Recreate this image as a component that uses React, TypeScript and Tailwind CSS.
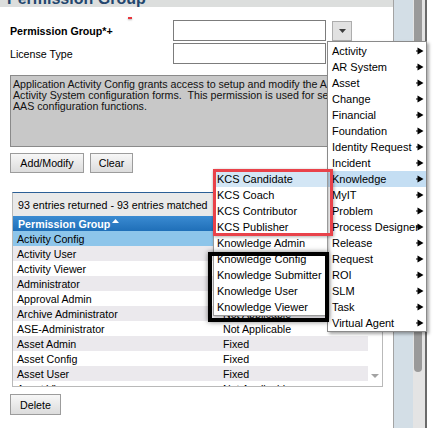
import React from "react";

const menuItems = [
  "Activity",
  "AR System",
  "Asset",
  "Change",
  "Financial",
  "Foundation",
  "Identity Request",
  "Incident",
  "Knowledge",
  "MyIT",
  "Problem",
  "Process Designer",
  "Release",
  "Request",
  "ROI",
  "SLM",
  "Task",
  "Virtual Agent",
];

const subItems = [
  "KCS Candidate",
  "KCS Coach",
  "KCS Contributor",
  "KCS Publisher",
  "Knowledge Admin",
  "Knowledge Config",
  "Knowledge Submitter",
  "Knowledge User",
  "Knowledge Viewer",
];

const rows: [string, string][] = [
  ["Activity Config", "Fixed"],
  ["Activity User", "Fixed"],
  ["Activity Viewer", "Fixed"],
  ["Administrator", "Fixed"],
  ["Approval Admin", "Not Applicable"],
  ["Archive Administrator", "Not Applicable"],
  ["ASE-Administrator", "Not Applicable"],
  ["Asset Admin", "Fixed"],
  ["Asset Config", "Fixed"],
  ["Asset User", "Fixed"],
  ["Asset Viewer", "Not Applicable"],
];

function Arrow() {
  return (
    <svg width="8" height="8" viewBox="0 0 8 8" className="absolute right-[2px] top-[4px]">
      <rect x="0" y="3.5" width="2" height="1" fill="#000" />
      <polygon points="1.5,0.5 7.5,4 1.5,7.5" fill="#000" />
    </svg>
  );
}

export default function App() {
  return (
    <div className="relative w-[433px] h-[428px] overflow-hidden bg-white font-['Liberation_Sans',Arial,sans-serif] text-black">
      <div className="flex h-full">
        {/* main column */}
        <div className="w-[393px] flex flex-col">
          <div className="h-[7px] bg-[#dcdedd] overflow-hidden">
            <div className="ml-[7px] mt-[-9px] text-[16px] leading-[16px] font-bold text-[#23466e] whitespace-nowrap">
              Permission Group
            </div>
          </div>

          <div className="mt-[13px] ml-[10px] flex items-center h-[21px]">
            <div className="w-[163px] text-[10.667px] font-bold">Permission Group*+</div>
            <div className="w-[153px] h-[21px] border border-[#7c7c7c] bg-white" />
            <div className="ml-[6px] w-[20px] h-[20px] bg-[#e1e1e1] border border-[#adadad] flex items-center justify-center">
              <svg width="7" height="4" viewBox="0 0 7 4">
                <polygon points="0,0 7,0 3.5,4" fill="#3c3c3c" />
              </svg>
            </div>
          </div>

          <div className="mt-[2px] ml-[10px] flex items-center h-[21px]">
            <div className="w-[163px] text-[10.667px]">License Type</div>
            <div className="w-[153px] h-[21px] border border-[#7c7c7c] bg-white" />
          </div>

          <div className="mt-[11px] ml-[10px] w-[377px] h-[72px] bg-[#c8c8c8] border border-[#8a8a8a] pl-[2px] pt-[3px] overflow-hidden text-[10.667px] leading-[11px] text-[#111]">
            <div className="whitespace-nowrap">Application Activity Config grants access to setup and modify the Application</div>
            <div className="whitespace-nowrap">Activity System configuration forms.&nbsp; This permission is used for setting up</div>
            <div className="whitespace-nowrap">AAS configuration functions.</div>
          </div>

          <div className="mt-[6px] ml-[10px] flex gap-[6px]">
            <div className="w-[74px] h-[20px] border border-[#9c9c9c] bg-gradient-to-b from-[#f7f7f7] to-[#dcdcdc] flex items-center justify-center text-[10.667px]">
              Add/Modify
            </div>
            <div className="w-[43px] h-[20px] border border-[#9c9c9c] bg-gradient-to-b from-[#f7f7f7] to-[#dcdcdc] flex items-center justify-center text-[10.667px]">
              Clear
            </div>
          </div>

          <div className="mt-[19px] ml-[12px] w-[371px] h-[195px] border border-[#b9b9b9] border-t-[#2b5f96] flex flex-col overflow-hidden text-[10.667px]">
            <div className="h-[23px] shrink-0 bg-[#e9e9e9] flex items-center pl-[5px] whitespace-nowrap">
              93 entries returned - 93 entries matched
            </div>
            <div className="flex flex-1 min-h-0">
              <div className="w-[355px] flex flex-col">
                <div className="h-[15px] shrink-0 bg-gradient-to-b from-[#3a8bd2] to-[#1f6fb8] text-white font-bold flex items-center pl-[5px]">
                  <span>Permission Group</span>
                  <svg width="7" height="4" viewBox="0 0 7 4" className="ml-[2px] mb-[6px]">
                    <polygon points="0,4 7,4 3.5,0" fill="#fff" />
                  </svg>
                </div>
                {rows.map(([name, val], i) => (
                  <div
                    key={name}
                    className={
                      "h-[15px] shrink-0 flex items-center whitespace-nowrap " +
                      (i === 0 ? "bg-[#8dc5ea]" : i % 2 === 1 ? "bg-[#ebe9ed]" : "bg-white")
                    }
                  >
                    <div className="w-[206px] pl-[4px]">{name}</div>
                    <div className="pl-[4px]">{val}</div>
                  </div>
                ))}
              </div>
              <div className="w-[14px] flex flex-col justify-end items-center pb-[8px]">
                <svg width="8" height="4" viewBox="0 0 8 4">
                  <polygon points="0,0 8,0 4,4" fill="#a3a3a3" />
                </svg>
              </div>
            </div>
          </div>

          <div className="mt-[7px] ml-[10px]">
            <div className="w-[51px] h-[21px] border border-[#9c9c9c] bg-gradient-to-b from-[#f7f7f7] to-[#dcdcdc] flex items-center justify-center text-[10.667px]">
              Delete
            </div>
          </div>
        </div>

        {/* right side strip */}
        <div className="w-[1px] bg-[#a3a3a3]" />
        <div className="w-[19px] bg-[#d3dee6]" />
        <div className="w-[12px] bg-[#e4e4e4]">
          <div className="ml-[1px] w-[8px] h-[372px] bg-[#9a9a9a] rounded-b-[4px]" />
        </div>
        <div className="w-[2px] bg-[#6a6a6a]" />
        <div className="w-[6px] bg-white" />
      </div>

      {/* red mark */}
      <div className="absolute left-[128px] top-[17px] w-[4px] h-[2px] bg-[#e8363d] shadow-[0_1px_2px_rgba(0,0,0,0.3)]" />

      {/* main dropdown menu */}
      <div className="absolute left-[327px] top-[41px] w-[100px] bg-white border border-[#8a8a8a] pt-[1px] shadow-[2px_2px_3px_rgba(0,0,0,0.35)] text-[11px] leading-[16px]">
        {menuItems.map((m) => (
          <div
            key={m}
            className={"relative h-[16px] pl-[4px] whitespace-nowrap " + (m === "Knowledge" ? "bg-[#c4def3]" : "")}
          >
            {m}
            <Arrow />
          </div>
        ))}
      </div>

      {/* submenu */}
      <div className="absolute left-[213px] top-[170px] w-[115px] bg-white border border-[#9a9a9a] shadow-[1px_1px_3px_rgba(0,0,0,0.3)] text-[11px] leading-[16px]">
        {subItems.map((s, i) => (
          <div key={s} className={"h-[16px] pl-[3px] whitespace-nowrap " + (i === 0 ? "bg-[#d3e6f5]" : "")}>
            {s}
          </div>
        ))}
      </div>

      {/* annotations */}
      <div className="absolute left-[213px] top-[169px] w-[120px] h-[67px] border-[3px] border-[#e9424a] shadow-[1px_1px_3px_rgba(0,0,0,0.3)]" />
      <div className="absolute left-[208px] top-[252px] w-[121px] h-[70px] border-[4px] border-black shadow-[0_0_5px_rgba(0,0,0,0.5)]" />
    </div>
  );
}
